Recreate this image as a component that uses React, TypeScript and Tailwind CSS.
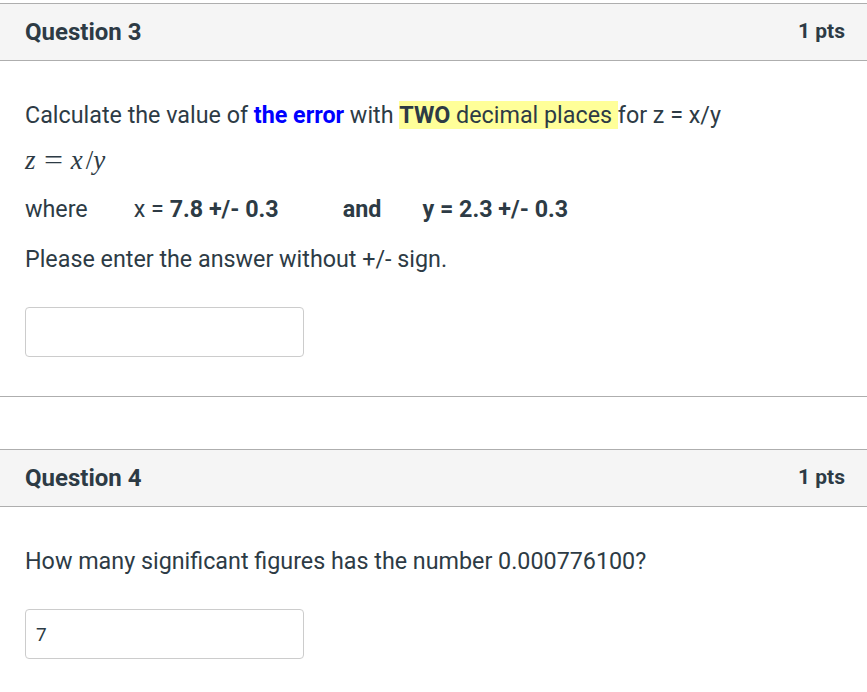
import React from 'react';

const font = { fontFamily: 'Roboto, "Liberation Sans", sans-serif' };

const QuestionHeader = ({ title, pts }: { title: string; pts: string }) => (
  <div className="flex h-[58px] items-center justify-between border-y border-[#aeaeae] bg-[#f5f5f5] pl-[25px] pr-[22px]">
    <span className="text-[24px] font-bold text-[#2d3b45]">{title}</span>
    <span className="text-[21px] font-bold text-[#2d3b45]">{pts}</span>
  </div>
);

const AnswerBox = ({ value }: { value?: string }) => (
  <input
    readOnly
    value={value ?? ''}
    className="block h-[50px] w-[279px] rounded-[4px] border border-[#cccccc] bg-white px-[10px] text-[19px] text-[#2d3b45] outline-none"
  />
);

export default function App() {
  return (
    <div className="min-h-[692px] w-full bg-white pt-[3px] text-[#2d3b45]" style={font}>
      <section>
        <QuestionHeader title="Question 3" pts="1 pts" />
        <div className="border-b border-[#aeaeae] px-[25px] pt-[37px] pb-[39px] text-[23.3px]">
          <p className="leading-[34px]">
            Calculate the value of <strong className="font-bold text-[#0000ff]">the error</strong> with{' '}
            <span className="bg-[#ffff99]">
              <strong className="font-bold">TWO</strong> decimal places{' '}
            </span>
            for z = x/y
          </p>
          <p
            className="mt-[11px] leading-[34px] text-[27px]"
            style={{ fontFamily: '"Liberation Serif", "DejaVu Serif", serif' }}
          >
            <i>z</i>
            <span className="mx-[10px] inline-block scale-x-125">=</span>
            <i>x</i>
            <span className="ml-[3px]">/</span>
            <i>y</i>
          </p>
          <p className="mt-[15px] leading-[34px]">
            where
            <span className="ml-[46px]">
              x = <strong className="font-bold">7.8 +/- 0.3</strong>
            </span>
            <strong className="ml-[64px] font-bold">and</strong>
            <strong className="ml-[41px] font-bold">y = 2.3 +/- 0.3</strong>
          </p>
          <p className="mt-[16px] leading-[34px]">Please enter the answer without +/- sign.</p>
          <div className="mt-[31px]">
            <AnswerBox />
          </div>
        </div>
      </section>

      <section className="mt-[52px]">
        <QuestionHeader title="Question 4" pts="1 pts" />
        <div className="px-[25px] pt-[37px] pb-[40px] text-[23.3px]">
          <p className="leading-[34px]">How many significant figures has the number 0.000776100?</p>
          <div className="mt-[31px]">
            <AnswerBox value="7" />
          </div>
        </div>
      </section>
    </div>
  );
}
